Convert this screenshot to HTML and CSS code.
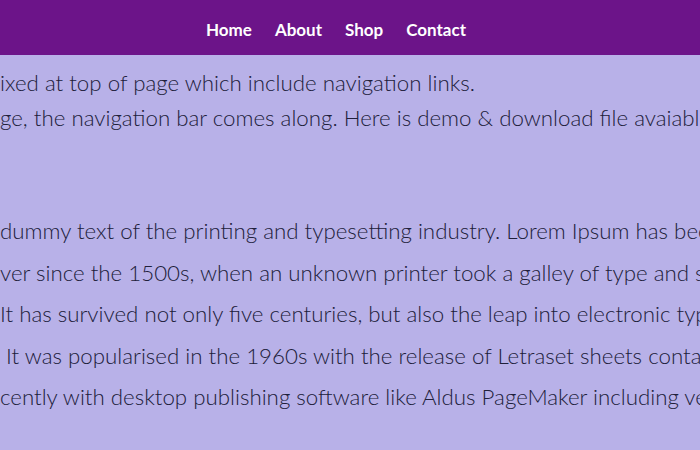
FILE: index.html
```html
<!DOCTYPE html>
<html>
<head>
<meta charset="utf-8">
<link rel="stylesheet" href="styles.css">
</head>
<body>
<nav class="topnav">
  <ul class="menu">
    <li><a href="#">Home</a></li>
    <li><a href="#">About</a></li>
    <li><a href="#">Shop</a></li>
    <li><a href="#">Contact</a></li>
  </ul>
</nav>
<main class="content">
  <p class="intro">
    <span class="line">ixed at top of page which include navigation links.</span>
    <span class="line">ge, the navigation bar comes along. Here is demo &amp; download file avaiable here.</span>
  </p>
  <p class="lorem">
    <span class="line">dummy text of the printing and typesetting industry. Lorem Ipsum has been the industry's</span>
    <span class="line">ver since the 1500s, when an unknown printer took a galley of type and scrambled it</span>
    <span class="line">It has survived not only five centuries, but also the leap into electronic typesetting,</span>
    <span class="line"> It was popularised in the 1960s with the release of Letraset sheets containing Lorem</span>
    <span class="line">cently with desktop publishing software like Aldus PageMaker including versions of</span>
  </p>
</main>
</body>
</html>
```
FILE: styles.css
```css
html, body {
  margin: 0;
  padding: 0;
}
body {
  background: #b8b1e8;
  color: #20203a;
  font-family: Lato, "Open Sans", sans-serif;
  overflow: hidden;
  height: 450px;
}
.topnav {
  position: fixed;
  top: 0;
  left: 0;
  right: 0;
  height: 55px;
  box-sizing: border-box;
  padding-top: 3px;
  background: #6c1489;
  display: flex;
  justify-content: center;
  align-items: center;
}
.menu {
  list-style: none;
  margin: 0;
  padding: 0 0 0 40px;
  margin-left: -68px;
  display: flex;
  gap: 23px;
}
.menu a {
  color: #ffffff;
  text-decoration: none;
  font-family: Lato, sans-serif;
  font-weight: 700;
  font-size: 17px;
}
.content {
  padding-top: 55px;
  overflow: hidden;
}
.content p {
  margin: 0;
  font-size: 22.3px;
  font-weight: 300;
  white-space: nowrap;
}
.line {
  display: block;
  white-space: pre;
}
.intro {
  line-height: 35px;
  padding-top: 10px;
}
.lorem {
  line-height: 41.5px;
  padding-top: 75px;
}
```
